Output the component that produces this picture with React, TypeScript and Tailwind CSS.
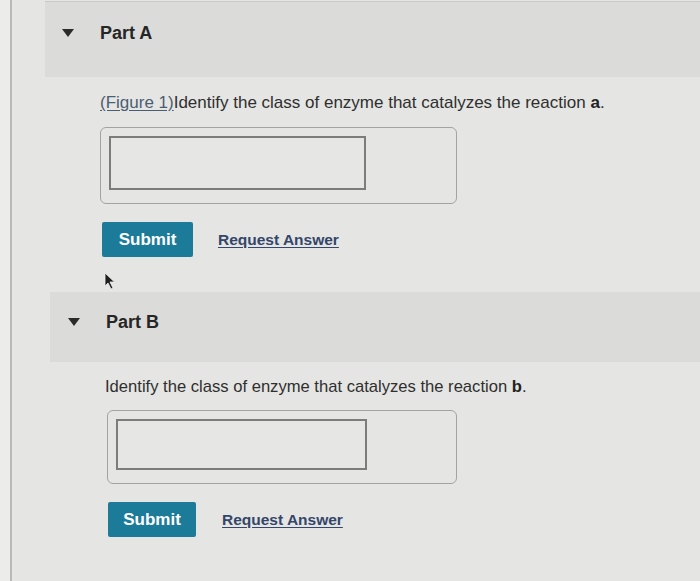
import React from 'react';

type PartProps = {
    label: string;
    bandOffset: string;
    arrowOffset: string;
    textOffset: string;
    question: React.ReactNode;
    questionSize: string;
    headerPad: string;
    questionGap: string;
    boxGap: string;
    boxSize: string;
    inputSize: string;
    actionsOffset: string;
    submitSize: string;
    linkGap: string;
};

function Caret() {
    return (
        <svg width="12" height="8" viewBox="0 0 12 8" className="shrink-0">
            <path d="M0 0 L12 0 L6 8 Z" fill="#2b2b2b" />
        </svg>
    );
}

function PartSection(p: PartProps) {
    return (
        <section>
            {/* collapsible header strip */}
            <div className={`${p.bandOffset} bg-[#dbdbd9] ${p.headerPad}`}>
                <div className="flex items-center h-6">
                    <div className={`${p.arrowOffset} flex items-center`}>
                        <Caret />
                    </div>
                    <span className={`${p.textOffset} text-[18px] font-bold text-[#262626] leading-6`}>{p.label}</span>
                </div>
            </div>

            <div className={p.questionGap}>
                <p className={`${p.questionSize} leading-6 text-[#2f2f2f]`}>{p.question}</p>

                <div className={`${p.boxGap} ${p.boxSize} border border-[#a3a3a1] rounded-[6px] p-[8px]`}>
                    <div className={`${p.inputSize} border-2 border-[#7c7c7a] bg-[#e6e6e4]`} />
                </div>

                <div className={`mt-[18px] flex items-center ${p.actionsOffset}`}>
                    <button className={`${p.submitSize} h-[35px] bg-[#1d7b9a] rounded-[2px] text-white text-[17px] font-bold`}>
                        Submit
                    </button>
                    <a href="#" className={`${p.linkGap} text-[15.5px] font-bold text-[#34466a] underline underline-offset-2`}>
                        Request Answer
                    </a>
                </div>
            </div>
        </section>
    );
}

export default function App() {
    return (
        <div
            className="relative flex w-[700px] min-h-[581px] bg-[#e5e5e3] overflow-hidden"
            style={{ fontFamily: '"Liberation Sans", Arial, sans-serif' }}
        >
            {/* left rail */}
            <div className="w-[12px] bg-[#ececea] border-r-2 border-[#b9b9b7] shrink-0" />

            <div className="flex-1 pt-[1px]">
                <div className="ml-[33px] h-px bg-[#c9c9c7]" />

                <PartSection
                    label="Part A"
                    bandOffset="ml-[33px] h-[75px]"
                    arrowOffset="ml-[17px]"
                    textOffset="ml-[26px]"
                    headerPad="pt-[19px]"
                    question={
                        <>
                            <a href="#" className="text-[#4b5d74] underline underline-offset-2">(Figure 1)</a>
                            Identify the class of enzyme that catalyzes the reaction <b className="text-[#222]">a</b>.
                        </>
                    }
                    questionSize="text-[17px]"
                    questionGap="pl-[88px] pt-[14px]"
                    boxGap="mt-[12px]"
                    boxSize="w-[357px] h-[77px]"
                    inputSize="w-[257px] h-[54px]"
                    actionsOffset="ml-[2px]"
                    submitSize="w-[91px]"
                    linkGap="ml-[25px]"
                />

                <div className="mt-[35px]">
                    <PartSection
                        label="Part B"
                        bandOffset="ml-[38px] h-[70px]"
                        arrowOffset="ml-[18px]"
                        textOffset="ml-[26px]"
                        headerPad="pt-[18px]"
                        question={
                            <>
                                Identify the class of enzyme that catalyzes the reaction <b className="text-[#222]">b</b>.
                            </>
                        }
                        questionSize="text-[16.6px]"
                        questionGap="pl-[93px] pt-[13px]"
                        boxGap="mt-[11px] ml-[2px]"
                        boxSize="w-[350px] h-[74px]"
                        inputSize="w-[251px] h-[51px]"
                        actionsOffset="ml-[3px]"
                        submitSize="w-[88px]"
                        linkGap="ml-[26px]"
                    />
                </div>
            </div>

            {/* mouse pointer */}
            <svg className="absolute left-[104px] top-[272px]" width="12" height="18" viewBox="0 0 12 18">
                <path d="M1 1 L1 14 L4 11 L7 17 L9 16 L6 10 L10.5 10 Z" fill="#1f1f1f" stroke="#f0f0f0" strokeWidth="0.8" />
            </svg>
        </div>
    );
}
